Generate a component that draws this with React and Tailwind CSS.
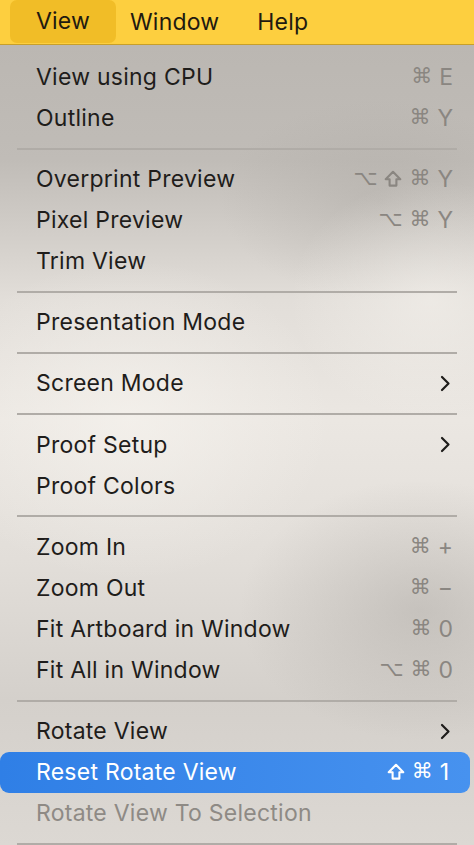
import React from "react";

const Chevron = () => (
  <svg width="11" height="17" viewBox="0 0 11 17" className="mr-[2px]">
    <path d="M2 2 L8.5 8.5 L2 15" fill="none" stroke="#1e1c1a" strokeWidth="2.2" strokeLinecap="round" strokeLinejoin="round" />
  </svg>
);

const Shift = ({ color }) => (
  <svg width="18" height="18" viewBox="0 0 18 18">
    <path d="M9 1.8 L16.3 9.2 L12.4 9.2 L12.4 15.6 L5.6 15.6 L5.6 9.2 L1.7 9.2 Z" fill="none" stroke={color} strokeWidth="2.1" strokeLinejoin="round" />
  </svg>
);

const Keys = ({ keys, light }) => {
  const color = light ? "#ffffff" : "#8a8681";
  return (
    <div className={`flex items-center gap-[7px] text-[23px] ${light ? "text-white" : "text-[#8a8681]"}`}>
      {keys.map((k, i) =>
        k === "⇧" ? (
          <Shift key={i} color={color} />
        ) : (
          <span key={i} className={/[⌘⌥]/.test(k) ? "text-[21px] font-['DejaVu_Sans']" : ""}>{k}</span>
        )
      )}
    </div>
  );
};

const Row = ({ label, keys, sub, disabled, active }) => (
  <div className={`h-[41px] flex items-center justify-between pl-[36px] pr-[21px] ${active ? "bg-gradient-to-r from-[#2f7fe6] to-[#4792ef] rounded-[9px] mr-[4px] pr-[17px]" : ""}`}>
    <span className={`text-[23px] tracking-[0.25px] ${active ? "text-white" : disabled ? "text-[#8e8a85]" : "text-[#1f1d1b]"}`}>{label}</span>
    {keys && <Keys keys={keys} light={active} />}
    {sub && <Chevron />}
  </div>
);

const Sep = () => (
  <div className="h-[20.2px] flex items-center px-[17px]">
    <div className="h-[2px] w-full bg-[#b0aca7]" />
  </div>
);

export default function App() {
  return (
    <div
      className="w-[474px] h-[845px] overflow-hidden bg-[#dedad5]"
      style={{ fontFamily: "Inter, 'Liberation Sans', sans-serif" }}
    >
      <div className="relative w-full h-full bg-[linear-gradient(180deg,#b9b5b0_0px,#c0bcb7_160px,#e2ded9_300px,#ebe7e2_420px,#e2ded9_560px,#d4d0cb_700px,#dcd8d3_845px)]">
        <div className="absolute inset-0 bg-[radial-gradient(ellipse_200px_160px_at_130px_420px,rgba(246,243,238,0.7),transparent),radial-gradient(ellipse_140px_120px_at_430px_300px,rgba(244,241,236,0.6),transparent),radial-gradient(ellipse_180px_130px_at_420px_610px,rgba(170,166,161,0.45),transparent),radial-gradient(ellipse_160px_100px_at_380px_200px,rgba(165,161,156,0.35),transparent)]" />
        <div className="relative">
          <div className="h-[45px] bg-[#fdcf3f] border-b border-[#c79f2a] flex items-center pl-[10px] text-[23px] tracking-[0.2px] text-[#1f1a10]">
            <div className="h-[43px] w-[106px] rounded-[7px] bg-[#f1bd27] flex items-center pl-[26px] self-start">View</div>
            <div className="ml-[14px]">Window</div>
            <div className="ml-[38px]">Help</div>
          </div>
          <div className="pt-[11.5px]">
            <Row label="View using CPU" keys={["⌘", "E"]} />
            <Row label="Outline" keys={["⌘", "Y"]} />
            <Sep />
            <Row label="Overprint Preview" keys={["⌥", "⇧", "⌘", "Y"]} />
            <Row label="Pixel Preview" keys={["⌥", "⌘", "Y"]} />
            <Row label="Trim View" />
            <Sep />
            <Row label="Presentation Mode" />
            <Sep />
            <Row label="Screen Mode" sub />
            <Sep />
            <Row label="Proof Setup" sub />
            <Row label="Proof Colors" />
            <Sep />
            <Row label="Zoom In" keys={["⌘", "+"]} />
            <Row label="Zoom Out" keys={["⌘", "−"]} />
            <Row label="Fit Artboard in Window" keys={["⌘", "0"]} />
            <Row label="Fit All in Window" keys={["⌥", "⌘", "0"]} />
            <Sep />
            <Row label="Rotate View" sub />
            <Row label="Reset Rotate View" keys={["⇧", "⌘", "1"]} active />
            <Row label="Rotate View To Selection" disabled />
            <Sep />
          </div>
        </div>
      </div>
    </div>
  );
}
